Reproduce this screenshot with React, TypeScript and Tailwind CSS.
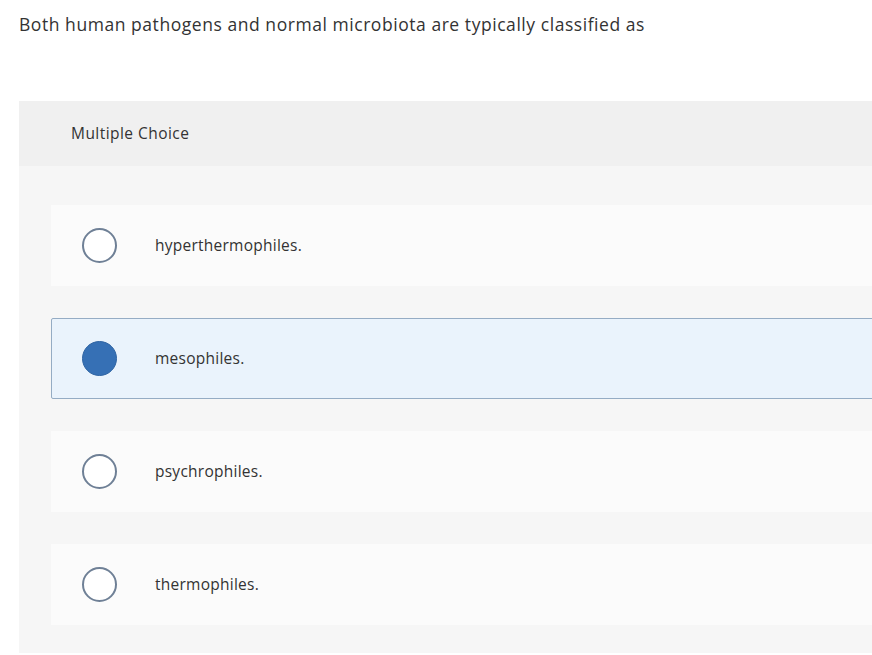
const options = [
  { label: "hyperthermophiles.", selected: false },
  { label: "mesophiles.", selected: true },
  { label: "psychrophiles.", selected: false },
  { label: "thermophiles.", selected: false },
];

function Radio({ selected }: { selected: boolean }) {
  if (selected) {
    return <span className="block h-[35px] w-[35px] rounded-full bg-[#3670b5] border border-[#2f64a3]" />;
  }
  return <span className="block h-[35px] w-[35px] rounded-full border-2 border-[#6f8096] bg-white" />;
}

export default function App() {
  return (
    <div className="w-[872px] h-[655px] overflow-hidden bg-white font-['Open_Sans',sans-serif] text-[#333]">
      <p className="pl-[19px] pt-[12px] text-[17.5px] leading-[24px] tracking-[0.55px]">
        Both human pathogens and normal microbiota are typically classified as
      </p>

      <div className="ml-[19px] mt-[65px] w-[880px]">
        <div className="h-[65px] bg-[#f0f0f0] pl-[52px] flex items-center text-[15.5px] tracking-[0.45px]">
          Multiple Choice
        </div>
        <div className="bg-[#f6f6f6] pl-[32px] pt-[39px] pb-[28px] flex flex-col gap-[32px]">
          {options.map((o) => (
            <div
              key={o.label}
              className={
                o.selected
                  ? "h-[81px] flex items-center rounded-l-[2px] border border-[#95acc4] bg-[#eaf3fc] pl-[30px]"
                  : "h-[81px] flex items-center bg-[#fbfbfb] pl-[31px]"
              }
            >
              <Radio selected={o.selected} />
              <span className="ml-[38px] text-[15.5px] tracking-[0.25px]">{o.label}</span>
            </div>
          ))}
        </div>
      </div>
    </div>
  );
}
